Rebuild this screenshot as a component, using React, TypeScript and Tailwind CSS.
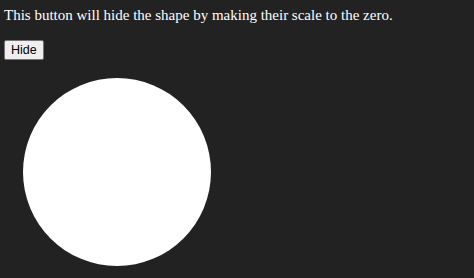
import React, { useState } from 'react';

const App: React.FC = () => {
  const [hidden, setHidden] = useState(false);

  return (
    <div className="min-h-screen bg-[#222222] text-white font-['Liberation_Serif',serif] px-1 pt-[7px]">
      <p className="text-[15px] leading-[1.15]">This button will hide the shape by making their scale to the zero.</p>

      <button
        onClick={() => setHidden(h => !h)}
        className="mt-[15.5px] h-[20px] px-[6px] flex items-center bg-[#efefef] text-black border border-[#767676] rounded-[2px] text-[12.5px] leading-none font-['Liberation_Sans',Arial,sans-serif]"
      >
        Hide
      </button>

      <div
        className={`mt-[18px] ml-[18.5px] w-[188px] h-[188px] rounded-full bg-white transition-transform duration-500 ${hidden ? 'scale-0' : 'scale-100'}`}
      />
    </div>
  );
};

export default App;
